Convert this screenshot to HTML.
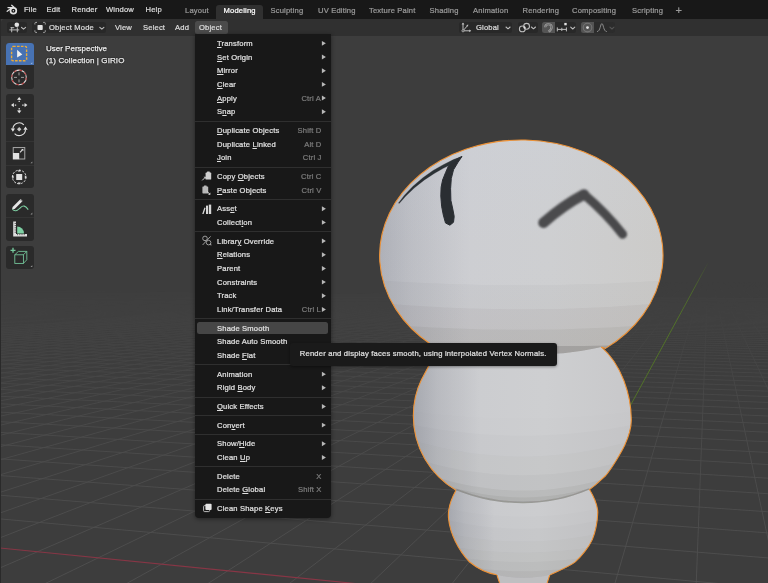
<!DOCTYPE html>
<html><head><meta charset="utf-8"><title>Blender</title>
<style>
*{box-sizing:border-box;margin:0;padding:0}
html,body{width:768px;height:583px;overflow:hidden;background:#3d3d3d}
body{position:relative;font-family:"Liberation Sans","DejaVu Sans",sans-serif;font-size:8px;color:#e4e4e4;-webkit-font-smoothing:antialiased}
#topbar,#header,#menu,#tip,#vptext{will-change:transform}
#topbar .t,#header .t,#menu .mi,#tip span{-webkit-text-stroke:0.22px currentColor}
#menu .mi,#topbar .t,#header .t,#tip span{font-size:7.6px !important;letter-spacing:0.17px}
#topbar .t.plus{font-size:11px !important}
#tip span{letter-spacing:0.205px !important}
#menu .lb u{text-decoration-thickness:0.7px}
.abs{position:absolute}
#topbar{position:absolute;left:0;top:0;width:768px;height:19px;background:#181818}
#topbar .t{position:absolute;top:5px;line-height:10px;font-size:8px;color:#dcdcdc;white-space:nowrap}
#topbar .tab{color:#9a9a9a;top:6.2px}
#tabact{position:absolute;left:216px;top:5px;width:47px;height:14px;background:#303030;border-radius:3px 3px 0 0}
#header{position:absolute;left:1px;top:19px;width:767px;height:17px;background:#303030;border-radius:4px 0 0 0}
#header .t{position:absolute;top:3.5px;line-height:10px;font-size:8px;color:#dcdcdc;white-space:nowrap}
.hb{position:absolute;top:2.5px;height:11.5px;background:#282828;border-radius:2.5px}
.hb.on{background:#545454}
#leftedge{position:absolute;left:0;top:19px;width:1.2px;height:564px;background:#2a2a2a}
.tool{position:absolute;left:6px;width:27.5px;background:#2a2a2a;border-radius:3px}
.tool i{position:absolute;left:0;width:27.5px;height:1px;background:#343434}
#vptext{position:absolute;left:46px;top:43.2px;font-size:8px;line-height:11.8px;color:#f2f2f2;white-space:nowrap;text-shadow:0 0 1.5px #000,0 0 1px #000;-webkit-text-stroke:0.25px #f2f2f2}
#menu{position:absolute;left:195px;top:34px;width:136px;height:484px;background:#181818;border-radius:0 0 4px 4px;box-shadow:0 1px 4px rgba(0,0,0,.45)}
#menu .mi{position:absolute;left:0;width:136px;height:14px;line-height:14px;font-size:8px;color:#e0e0e0;white-space:nowrap}
#menu .lb{position:absolute;left:22px;top:0.7px}
#menu .lb u{text-decoration:underline;text-underline-offset:1px}
#menu .sc{position:absolute;right:9.5px;top:0.7px;color:#7c7c7c}
#menu .sc.ar{right:10px}
#menu .arw{position:absolute;left:126.8px;top:4.3px;width:0;height:0;border-left:4.2px solid #c4c4c4;border-top:2.6px solid transparent;border-bottom:2.6px solid transparent}
#menu .sep{position:absolute;left:0;width:136px;height:1px;background:#2f2f2f}
#menu .hl{position:absolute;left:2px;width:131px;height:12.5px;background:#464646;border-radius:2.5px}
#tip{position:absolute;left:289.8px;top:342.6px;width:267px;height:23px;background:#1a1a1a;border-radius:3px;box-shadow:0 1px 3px rgba(0,0,0,.4)}
#tip span{position:absolute;left:9.8px;top:6px;line-height:10px;font-size:8px;color:#e0e0e0;white-space:nowrap}
svg{position:absolute;left:0;top:0}
</style></head><body>

<!-- viewport grid + object -->
<svg width="768" height="583" viewBox="0 0 768 583">
<defs>
<linearGradient id="fade" x1="0" y1="262" x2="0" y2="583" gradientUnits="userSpaceOnUse">
<stop offset="0" stop-color="#fff" stop-opacity="0"/><stop offset="0.06" stop-color="#fff" stop-opacity="0"/><stop offset="0.2" stop-color="#fff" stop-opacity="0.27"/><stop offset="0.5" stop-color="#fff" stop-opacity="0.72"/><stop offset="1" stop-color="#fff" stop-opacity="1"/>
</linearGradient>
<linearGradient id="fade2" x1="0" y1="262" x2="0" y2="583" gradientUnits="userSpaceOnUse">
<stop offset="0" stop-color="#fff" stop-opacity="0"/><stop offset="0.01" stop-color="#fff" stop-opacity="0.15"/><stop offset="0.08" stop-color="#fff" stop-opacity="0.75"/><stop offset="0.2" stop-color="#fff" stop-opacity="1"/><stop offset="1" stop-color="#fff" stop-opacity="1"/>
</linearGradient>
<mask id="gm2" maskUnits="userSpaceOnUse" x="0" y="0" width="768" height="583"><rect x="0" y="250" width="768" height="340" fill="url(#fade2)"/></mask>
<mask id="gm" maskUnits="userSpaceOnUse" x="0" y="0" width="768" height="583"><rect x="0" y="250" width="768" height="340" fill="url(#fade)"/></mask>
<linearGradient id="gHead" x1="379" y1="0" x2="663" y2="0" gradientUnits="userSpaceOnUse">
<stop offset="0" stop-color="#c6c7cc"/><stop offset="0.3" stop-color="#cdced2"/><stop offset="0.6" stop-color="#cecfd1"/><stop offset="1" stop-color="#cccbc9"/>
</linearGradient>
<linearGradient id="gHeadV" x1="0" y1="140" x2="0" y2="350" gradientUnits="userSpaceOnUse">
<stop offset="0" stop-color="#cdd2dc" stop-opacity="0.25"/><stop offset="0.5" stop-color="#cdd2dc" stop-opacity="0"/><stop offset="1" stop-color="#c8c0b4" stop-opacity="0.15"/>
</linearGradient>
<linearGradient id="gHeadL" x1="379" y1="0" x2="470" y2="0" gradientUnits="userSpaceOnUse">
<stop offset="0" stop-color="#5a6070" stop-opacity="0.22"/><stop offset="0.35" stop-color="#5a6070" stop-opacity="0.11"/><stop offset="1" stop-color="#5a6070" stop-opacity="0"/>
</linearGradient>
<linearGradient id="gMid" x1="414" y1="0" x2="632" y2="0" gradientUnits="userSpaceOnUse">
<stop offset="0" stop-color="#c2c3c7"/><stop offset="0.3" stop-color="#cccdd0"/><stop offset="0.6" stop-color="#cecfd1"/><stop offset="1" stop-color="#c8c8ca"/>
</linearGradient>
<linearGradient id="gMidL" x1="414" y1="0" x2="480" y2="0" gradientUnits="userSpaceOnUse">
<stop offset="0" stop-color="#5a6070" stop-opacity="0.26"/><stop offset="0.35" stop-color="#5a6070" stop-opacity="0.12"/><stop offset="1" stop-color="#5a6070" stop-opacity="0"/>
</linearGradient>
<linearGradient id="gBot" x1="448" y1="0" x2="598" y2="0" gradientUnits="userSpaceOnUse">
<stop offset="0" stop-color="#c0c1c5"/><stop offset="0.3" stop-color="#cacbce"/><stop offset="0.6" stop-color="#cccdcf"/><stop offset="1" stop-color="#c6c6c8"/>
</linearGradient>
<linearGradient id="gBotL" x1="448" y1="0" x2="495" y2="0" gradientUnits="userSpaceOnUse">
<stop offset="0" stop-color="#5a6070" stop-opacity="0.24"/><stop offset="0.35" stop-color="#5a6070" stop-opacity="0.11"/><stop offset="1" stop-color="#5a6070" stop-opacity="0"/>
</linearGradient>
<filter id="bl2" x="-20%" y="-20%" width="140%" height="140%"><feGaussianBlur stdDeviation="0.55"/></filter>
<filter id="bl" x="-20%" y="-20%" width="140%" height="140%"><feGaussianBlur stdDeviation="0.9"/></filter>
</defs>
<g mask="url(#gm)">
<g stroke="#505050" stroke-width="0.9" fill="none">
<line x1="-10" y1="693.2" x2="780" y2="812.7"/>
<line x1="-10" y1="630.2" x2="780" y2="732.3"/>
<line x1="-10" y1="583.3" x2="780" y2="672.4"/>
<line x1="-10" y1="518.0" x2="780" y2="589.0"/>
<line x1="-10" y1="494.4" x2="780" y2="558.9"/>
<line x1="-10" y1="474.8" x2="780" y2="533.8"/>
<line x1="-10" y1="458.2" x2="780" y2="512.6"/>
<line x1="-10" y1="444.1" x2="780" y2="494.5"/>
<line x1="-10" y1="431.8" x2="780" y2="478.9"/>
<line x1="-10" y1="421.1" x2="780" y2="465.2"/>
<line x1="-10" y1="411.6" x2="780" y2="453.1"/>
<line x1="-10" y1="403.3" x2="780" y2="442.4"/>
<line x1="-10" y1="395.8" x2="780" y2="432.8"/>
<line x1="-10" y1="389.0" x2="780" y2="424.2"/>
<line x1="-10" y1="382.9" x2="780" y2="416.5"/>
<line x1="-10" y1="377.4" x2="780" y2="409.4"/>
<line x1="-10" y1="372.3" x2="780" y2="402.9"/>
<line x1="-10" y1="367.7" x2="780" y2="397.0"/>
<line x1="-10" y1="363.5" x2="780" y2="391.6"/>
<line x1="-10" y1="359.5" x2="780" y2="386.6"/>
<line x1="-10" y1="355.9" x2="780" y2="381.9"/>
<line x1="-10" y1="352.5" x2="780" y2="377.6"/>
<line x1="-10" y1="349.4" x2="780" y2="373.6"/>
<line x1="-10" y1="346.5" x2="780" y2="369.9"/>
<line x1="-10" y1="343.7" x2="780" y2="366.4"/>
<line x1="-10" y1="341.2" x2="780" y2="363.1"/>
<line x1="-10" y1="338.8" x2="780" y2="360.0"/>
<line x1="-10" y1="336.5" x2="780" y2="357.1"/>
<line x1="-10" y1="334.3" x2="780" y2="354.4"/>
<line x1="-10" y1="332.3" x2="780" y2="351.8"/>
<line x1="-10" y1="330.4" x2="780" y2="349.4"/>
<line x1="-10" y1="328.6" x2="780" y2="347.1"/>
<line x1="-10" y1="326.9" x2="780" y2="344.9"/>
<line x1="-10" y1="325.3" x2="780" y2="342.8"/>
<line x1="-10" y1="323.7" x2="780" y2="340.8"/>
<line x1="-10" y1="322.2" x2="780" y2="338.9"/>
<line x1="-10" y1="320.8" x2="780" y2="337.2"/>
<line x1="-10" y1="319.5" x2="780" y2="335.4"/>
<line x1="-10" y1="318.2" x2="780" y2="333.8"/>
<line x1="-10" y1="317.0" x2="780" y2="332.2"/>
<line x1="-10" y1="315.8" x2="780" y2="330.7"/>
<line x1="-10" y1="314.7" x2="780" y2="329.3"/>
<line x1="-10" y1="313.6" x2="780" y2="327.9"/>
<line x1="-10" y1="312.6" x2="780" y2="326.6"/>
<line x1="-10" y1="311.6" x2="780" y2="325.3"/>
<line x1="-10" y1="310.6" x2="780" y2="324.1"/>
<line x1="-10" y1="309.7" x2="780" y2="322.9"/>
<line x1="-10" y1="308.8" x2="780" y2="321.8"/>
<line x1="-10" y1="308.0" x2="780" y2="320.7"/>
<line x1="-10" y1="307.1" x2="780" y2="319.7"/>
<line x1="-10" y1="306.3" x2="780" y2="318.6"/>
<line x1="-10" y1="305.6" x2="780" y2="317.7"/>
<line x1="-10" y1="304.8" x2="780" y2="316.7"/>
<line x1="-10" y1="304.1" x2="780" y2="315.8"/>
<line x1="-10" y1="303.4" x2="780" y2="314.9"/>
<line x1="-10" y1="302.8" x2="780" y2="314.1"/>
<line x1="-10" y1="302.1" x2="780" y2="313.2"/>
<line x1="-10" y1="301.5" x2="780" y2="312.4"/>
<line x1="-10" y1="300.9" x2="780" y2="311.7"/>
<line x1="-10" y1="300.3" x2="780" y2="310.9"/>
<line x1="-10" y1="299.7" x2="780" y2="310.2"/>
<line x1="-10" y1="299.2" x2="780" y2="309.5"/>
<line x1="-10" y1="298.6" x2="780" y2="308.8"/>
<line x1="-10" y1="298.1" x2="780" y2="308.1"/>
<line x1="-10" y1="297.6" x2="780" y2="307.4"/>
<line x1="-10" y1="297.1" x2="780" y2="306.8"/>
<line x1="-10" y1="296.6" x2="780" y2="306.2"/>
<line x1="-10" y1="296.1" x2="780" y2="305.6"/>
<line x1="-10" y1="295.7" x2="780" y2="305.0"/>
<line x1="-10" y1="295.2" x2="780" y2="304.5"/>
<line x1="-10" y1="294.8" x2="780" y2="303.9"/>
<line x1="-10" y1="294.4" x2="780" y2="303.4"/>
<line x1="-10" y1="294.0" x2="780" y2="302.8"/>
<line x1="-10" y1="293.6" x2="780" y2="302.3"/>
<line x1="-10" y1="293.2" x2="780" y2="301.8"/>
<line x1="-10" y1="292.8" x2="780" y2="301.3"/>
<line x1="-10" y1="292.4" x2="780" y2="300.9"/>
<line x1="-10" y1="292.1" x2="780" y2="300.4"/>
<line x1="-10" y1="291.7" x2="780" y2="300.0"/>
<line x1="-10" y1="291.4" x2="780" y2="299.5"/>
<line x1="-10" y1="291.0" x2="780" y2="299.1"/>
<line x1="-10" y1="290.7" x2="780" y2="298.7"/>
<line x1="708.5" y1="262.0" x2="3946.2" y2="600"/>
<line x1="708.5" y1="262.0" x2="3860.7" y2="600"/>
<line x1="708.5" y1="262.0" x2="3775.1" y2="600"/>
<line x1="708.5" y1="262.0" x2="3689.6" y2="600"/>
<line x1="708.5" y1="262.0" x2="3604.1" y2="600"/>
<line x1="708.5" y1="262.0" x2="3518.5" y2="600"/>
<line x1="708.5" y1="262.0" x2="3433.0" y2="600"/>
<line x1="708.5" y1="262.0" x2="3347.4" y2="600"/>
<line x1="708.5" y1="262.0" x2="3261.9" y2="600"/>
<line x1="708.5" y1="262.0" x2="3176.3" y2="600"/>
<line x1="708.5" y1="262.0" x2="3090.8" y2="600"/>
<line x1="708.5" y1="262.0" x2="3005.3" y2="600"/>
<line x1="708.5" y1="262.0" x2="2919.7" y2="600"/>
<line x1="708.5" y1="262.0" x2="2834.2" y2="600"/>
<line x1="708.5" y1="262.0" x2="2748.6" y2="600"/>
<line x1="708.5" y1="262.0" x2="2663.1" y2="600"/>
<line x1="708.5" y1="262.0" x2="2577.5" y2="600"/>
<line x1="708.5" y1="262.0" x2="2492.0" y2="600"/>
<line x1="708.5" y1="262.0" x2="2406.5" y2="600"/>
<line x1="708.5" y1="262.0" x2="2320.9" y2="600"/>
<line x1="708.5" y1="262.0" x2="2235.4" y2="600"/>
<line x1="708.5" y1="262.0" x2="2149.8" y2="600"/>
<line x1="708.5" y1="262.0" x2="2064.3" y2="600"/>
<line x1="708.5" y1="262.0" x2="1978.7" y2="600"/>
<line x1="708.5" y1="262.0" x2="1893.2" y2="600"/>
<line x1="708.5" y1="262.0" x2="1807.7" y2="600"/>
<line x1="708.5" y1="262.0" x2="1722.1" y2="600"/>
<line x1="708.5" y1="262.0" x2="1636.6" y2="600"/>
<line x1="708.5" y1="262.0" x2="1551.0" y2="600"/>
<line x1="708.5" y1="262.0" x2="1465.5" y2="600"/>
<line x1="708.5" y1="262.0" x2="1379.9" y2="600"/>
<line x1="708.5" y1="262.0" x2="1294.4" y2="600"/>
<line x1="708.5" y1="262.0" x2="1208.9" y2="600"/>
<line x1="708.5" y1="262.0" x2="1123.3" y2="600"/>
<line x1="708.5" y1="262.0" x2="1037.8" y2="600"/>
<line x1="708.5" y1="262.0" x2="952.2" y2="600"/>
<line x1="708.5" y1="262.0" x2="866.7" y2="600"/>
<line x1="708.5" y1="262.0" x2="781.1" y2="600"/>
<line x1="708.5" y1="262.0" x2="695.6" y2="600"/>
<line x1="708.5" y1="262.0" x2="610.1" y2="600"/>
<line x1="708.5" y1="262.0" x2="439.0" y2="600"/>
<line x1="708.5" y1="262.0" x2="353.4" y2="600"/>
<line x1="708.5" y1="262.0" x2="267.9" y2="600"/>
<line x1="708.5" y1="262.0" x2="182.3" y2="600"/>
<line x1="708.5" y1="262.0" x2="96.8" y2="600"/>
<line x1="708.5" y1="262.0" x2="11.3" y2="600"/>
<line x1="708.5" y1="262.0" x2="-74.3" y2="600"/>
<line x1="708.5" y1="262.0" x2="-159.8" y2="600"/>
<line x1="708.5" y1="262.0" x2="-245.4" y2="600"/>
<line x1="708.5" y1="262.0" x2="-330.9" y2="600"/>
<line x1="708.5" y1="262.0" x2="-416.5" y2="600"/>
<line x1="708.5" y1="262.0" x2="-502.0" y2="600"/>
<line x1="708.5" y1="262.0" x2="-587.5" y2="600"/>
<line x1="708.5" y1="262.0" x2="-673.1" y2="600"/>
<line x1="708.5" y1="262.0" x2="-758.6" y2="600"/>
<line x1="708.5" y1="262.0" x2="-844.2" y2="600"/>
<line x1="708.5" y1="262.0" x2="-929.7" y2="600"/>
<line x1="708.5" y1="262.0" x2="-1015.3" y2="600"/>
<line x1="708.5" y1="262.0" x2="-1100.8" y2="600"/>
<line x1="708.5" y1="262.0" x2="-1186.3" y2="600"/>
<line x1="708.5" y1="262.0" x2="-1271.9" y2="600"/>
<line x1="708.5" y1="262.0" x2="-1357.4" y2="600"/>
<line x1="708.5" y1="262.0" x2="-1443.0" y2="600"/>
<line x1="708.5" y1="262.0" x2="-1528.5" y2="600"/>
<line x1="708.5" y1="262.0" x2="-1614.1" y2="600"/>
<line x1="708.5" y1="262.0" x2="-1699.6" y2="600"/>
<line x1="708.5" y1="262.0" x2="-1785.1" y2="600"/>
<line x1="708.5" y1="262.0" x2="-1870.7" y2="600"/>
<line x1="708.5" y1="262.0" x2="-1956.2" y2="600"/>
<line x1="708.5" y1="262.0" x2="-2041.8" y2="600"/>
<line x1="708.5" y1="262.0" x2="-2127.3" y2="600"/>
<line x1="708.5" y1="262.0" x2="-2212.9" y2="600"/>
<line x1="708.5" y1="262.0" x2="-2298.4" y2="600"/>
<line x1="708.5" y1="262.0" x2="-2383.9" y2="600"/>
<line x1="708.5" y1="262.0" x2="-2469.5" y2="600"/>
<line x1="708.5" y1="262.0" x2="-2555.0" y2="600"/>
<line x1="708.5" y1="262.0" x2="-2640.6" y2="600"/>
<line x1="708.5" y1="262.0" x2="-2726.1" y2="600"/>
<line x1="708.5" y1="262.0" x2="-2811.7" y2="600"/>
<line x1="708.5" y1="262.0" x2="-2897.2" y2="600"/>
</g>
<line x1="-10" y1="547.0" x2="780" y2="626.0" stroke="#8a3646" stroke-width="1.1"/>
</g>
<g mask="url(#gm2)"><line x1="708.5" y1="262.0" x2="524.5" y2="600" stroke="#527229" stroke-width="1"/></g>

<!-- object -->
<g id="obj">
<path d="M496.5 573 C497.5 577 498.5 580 500 584 L546.9 584 C548 580 549.3 577 550.3 573 Z" fill="#bfbfc1"/><path d="M496.5 573 C497.5 577 498.5 580 500 584 M546.9 584 C548 580 549.3 577 550.3 573" fill="none" stroke="#ee9236" stroke-width="1.1"/>
<clipPath id="cBot"><path d="M456 490.2 C450 501 447.5 510 448.6 519 C450 533 458 550 469.6 562 C478 569 487 573 496.5 574.8 C512 579 536 579 550.3 574.8 C561.5 569.6 570 566 575.2 561.9 C581 557 589 547 592.3 539.6 C595 533 597.5 521 597.8 512.2 C597.5 505 594.9 498.4 589.2 489 Z"/></clipPath>
<path d="M456 490.2 C450 501 447.5 510 448.6 519 C450 533 458 550 469.6 562 C478 569 487 573 496.5 574.8 C512 579 536 579 550.3 574.8 C561.5 569.6 570 566 575.2 561.9 C581 557 589 547 592.3 539.6 C595 533 597.5 521 597.8 512.2 C597.5 505 594.9 498.4 589.2 489 Z" fill="url(#gBot)"/>
<g clip-path="url(#cBot)">
<rect x="440" y="480" width="170" height="110" fill="url(#gBotL)"/>
<path d="M440.0 506.3 L446.9 507.9 L453.8 509.4 L460.8 510.7 L467.7 511.9 L474.6 512.9 L481.5 513.8 L488.4 514.6 L495.3 515.3 L502.2 515.8 L509.2 516.1 L516.1 516.3 L523.0 516.4 L529.9 516.3 L536.8 516.1 L543.8 515.8 L550.7 515.3 L557.6 514.7 L564.5 513.9 L571.4 513.0 L578.3 512.0 L585.2 510.8 L592.2 509.5 L599.1 508.0 L606.0 506.4 L606 590 L440 590 Z" fill="#2a2418" fill-opacity="0.006"/>
<path d="M440.0 518.1 L446.9 519.7 L453.8 521.3 L460.8 522.6 L467.7 523.9 L474.6 524.9 L481.5 525.9 L488.4 526.7 L495.3 527.3 L502.2 527.8 L509.2 528.2 L516.1 528.4 L523.0 528.5 L529.9 528.4 L536.8 528.2 L543.8 527.9 L550.7 527.4 L557.6 526.7 L564.5 526.0 L571.4 525.0 L578.3 524.0 L585.2 522.7 L592.2 521.4 L599.1 519.9 L606.0 518.2 L606 590 L440 590 Z" fill="#2a2418" fill-opacity="0.01"/>
<path d="M440.0 531.7 L446.9 533.2 L453.8 534.6 L460.8 535.9 L467.7 537.0 L474.6 538.0 L481.5 538.9 L488.4 539.6 L495.3 540.2 L502.2 540.7 L509.2 541.0 L516.1 541.2 L523.0 541.3 L529.9 541.2 L536.8 541.0 L543.8 540.7 L550.7 540.3 L557.6 539.7 L564.5 538.9 L571.4 538.1 L578.3 537.1 L585.2 536.0 L592.2 534.7 L599.1 533.3 L606.0 531.8 L606 590 L440 590 Z" fill="#2a2418" fill-opacity="0.015"/>
<path d="M440.0 544.3 L446.9 545.6 L453.8 546.8 L460.8 547.9 L467.7 548.8 L474.6 549.7 L481.5 550.4 L488.4 551.1 L495.3 551.6 L502.2 552.0 L509.2 552.3 L516.1 552.4 L523.0 552.5 L529.9 552.4 L536.8 552.3 L543.8 552.0 L550.7 551.6 L557.6 551.1 L564.5 550.5 L571.4 549.8 L578.3 548.9 L585.2 548.0 L592.2 546.9 L599.1 545.7 L606.0 544.4 L606 590 L440 590 Z" fill="#2a2418" fill-opacity="0.02"/>
<path d="M440.0 554.1 L446.9 555.3 L453.8 556.5 L460.8 557.5 L467.7 558.4 L474.6 559.2 L481.5 559.9 L488.4 560.5 L495.3 561.0 L502.2 561.4 L509.2 561.7 L516.1 561.8 L523.0 561.9 L529.9 561.9 L536.8 561.7 L543.8 561.4 L550.7 561.1 L557.6 560.6 L564.5 560.0 L571.4 559.3 L578.3 558.5 L585.2 557.6 L592.2 556.6 L599.1 555.4 L606.0 554.2 L606 590 L440 590 Z" fill="#2a2418" fill-opacity="0.028"/>
<path d="M440.0 560.5 L446.9 562.2 L453.8 563.8 L460.8 565.2 L467.7 566.5 L474.6 567.6 L481.5 568.6 L488.4 569.4 L495.3 570.1 L502.2 570.6 L509.2 571.0 L516.1 571.2 L523.0 571.3 L529.9 571.2 L536.8 571.0 L543.8 570.6 L550.7 570.1 L557.6 569.5 L564.5 568.6 L571.4 567.7 L578.3 566.6 L585.2 565.3 L592.2 563.9 L599.1 562.3 L606.0 560.6 L606 590 L440 590 Z" fill="#2a2418" fill-opacity="0.04"/>
</g>
<path d="M456 490.2 C450 501 447.5 510 448.6 519 C450 533 458 550 469.6 562 C478 569 487 573 496.5 574.8 M550.3 574.8 C561.5 569.6 570 566 575.2 561.9 C581 557 589 547 592.3 539.6 C595 533 597.5 521 597.8 512.2 C597.5 505 594.9 498.4 589.2 489" fill="none" stroke="#ee9236" stroke-width="1.1" stroke-linejoin="round"/>
<clipPath id="cMid"><path d="M438 345.5 C435 353 428.5 367 421.3 380 C416 391 413.3 404 413.3 416 C413.3 447 430 475 456 490.2 C478 499 500 503.2 523 503.2 C546 503.2 568 499 589.4 489.6 L595.5 484.9 L605.8 475.5 C612 468 621 453 624.7 445.3 C629 436 631.5 425 631.3 418.9 C631 395 622 365 601.3 346.9 Z"/></clipPath>
<path d="M438 345.5 C435 353 428.5 367 421.3 380 C416 391 413.3 404 413.3 416 C413.3 447 430 475 456 490.2 C478 499 500 503.2 523 503.2 C546 503.2 568 499 589.4 489.6 L595.5 484.9 L605.8 475.5 C612 468 621 453 624.7 445.3 C629 436 631.5 425 631.3 418.9 C631 395 622 365 601.3 346.9 Z" fill="url(#gMid)"/>
<g clip-path="url(#cMid)">
<rect x="400" y="330" width="250" height="180" fill="url(#gMidL)"/>
<path d="M400.0 409.2 L410.2 410.6 L420.5 411.8 L430.8 413.0 L441.0 414.0 L451.2 414.9 L461.5 415.7 L471.8 416.4 L482.0 416.9 L492.2 417.4 L502.5 417.7 L512.8 417.8 L523.0 417.9 L533.2 417.8 L543.5 417.7 L553.8 417.4 L564.0 416.9 L574.2 416.4 L584.5 415.7 L594.8 414.9 L605.0 414.0 L615.2 413.0 L625.5 411.8 L635.8 410.6 L646.0 409.2 L646 520 L400 520 Z" fill="#2a2418" fill-opacity="0.005"/>
<path d="M400.0 421.8 L410.2 424.0 L420.5 426.0 L430.8 427.8 L441.0 429.4 L451.2 430.8 L461.5 432.1 L471.8 433.1 L482.0 434.0 L492.2 434.6 L502.5 435.1 L512.8 435.4 L523.0 435.5 L533.2 435.4 L543.5 435.1 L553.8 434.6 L564.0 434.0 L574.2 433.1 L584.5 432.1 L594.8 430.8 L605.0 429.4 L615.2 427.8 L625.5 426.0 L635.8 424.0 L646.0 421.8 L646 520 L400 520 Z" fill="#2a2418" fill-opacity="0.011"/>
<path d="M400.0 436.0 L410.2 439.3 L420.5 442.3 L430.8 444.9 L441.0 447.4 L451.2 449.5 L461.5 451.3 L471.8 452.9 L482.0 454.1 L492.2 455.1 L502.5 455.8 L512.8 456.3 L523.0 456.4 L533.2 456.3 L543.5 455.8 L553.8 455.1 L564.0 454.1 L574.2 452.9 L584.5 451.3 L594.8 449.5 L605.0 447.4 L615.2 444.9 L625.5 442.3 L635.8 439.3 L646.0 436.0 L646 520 L400 520 Z" fill="#2a2418" fill-opacity="0.016"/>
<path d="M400.0 453.9 L410.2 457.3 L420.5 460.4 L430.8 463.2 L441.0 465.7 L451.2 468.0 L461.5 469.9 L471.8 471.5 L482.0 472.8 L492.2 473.9 L502.5 474.6 L512.8 475.1 L523.0 475.2 L533.2 475.1 L543.5 474.6 L553.8 473.9 L564.0 472.8 L574.2 471.5 L584.5 469.9 L594.8 468.0 L605.0 465.7 L615.2 463.2 L625.5 460.4 L635.8 457.3 L646.0 453.9 L646 520 L400 520 Z" fill="#2a2418" fill-opacity="0.027"/>
<path d="M400.0 463.6 L410.2 467.9 L420.5 471.9 L430.8 475.4 L441.0 478.6 L451.2 481.4 L461.5 483.9 L471.8 485.9 L482.0 487.6 L492.2 488.9 L502.5 489.9 L512.8 490.4 L523.0 490.6 L533.2 490.4 L543.5 489.9 L553.8 488.9 L564.0 487.6 L574.2 485.9 L584.5 483.9 L594.8 481.4 L605.0 478.6 L615.2 475.4 L625.5 471.9 L635.8 467.9 L646.0 463.6 L646 520 L400 520 Z" fill="#2a2418" fill-opacity="0.05"/>
<path d="M400.0 466.3 L410.2 471.3 L420.5 475.8 L430.8 479.9 L441.0 483.6 L451.2 486.9 L461.5 489.7 L471.8 492.1 L482.0 494.0 L492.2 495.5 L502.5 496.6 L512.8 497.3 L523.0 497.5 L533.2 497.3 L543.5 496.6 L553.8 495.5 L564.0 494.0 L574.2 492.1 L584.5 489.7 L594.8 486.9 L605.0 483.6 L615.2 479.9 L625.5 475.8 L635.8 471.3 L646.0 466.3 L646 520 L400 520 Z" fill="#2a2418" fill-opacity="0.06"/>
<path d="M456 490.2 C478 499 500 503.2 523 503.2 C546 503.2 568 499 589.4 489.6" fill="none" stroke="#3a342c" stroke-opacity="0.2" stroke-width="3.2" filter="url(#bl2)"/>
</g>
<path d="M438 345.5 C435 353 428.5 367 421.3 380 C416 391 413.3 404 413.3 416 C413.3 447 430 475 456 490.2 M589.4 489.6 L595.5 484.9 L605.8 475.5 C612 468 621 453 624.7 445.3 C629 436 631.5 425 631.3 418.9 C631 395 622 365 601.3 346.9" fill="none" stroke="#ee9236" stroke-width="1.1" stroke-linejoin="round"/>
<clipPath id="cHead"><path d="M431 344.5 A141.7 115.5 0 1 1 605.5 348.4 L601.3 346.9 C590 349.5 572 352.5 558 353.6 C540 355.5 500 355.5 484 353.6 C465 351.5 448 348 431 344.5 Z"/></clipPath>
<path d="M431 344.5 A141.7 115.5 0 1 1 605.5 348.4 L601.3 346.9 C590 349.5 572 352.5 558 353.6 C540 355.5 500 355.5 484 353.6 C465 351.5 448 348 431 344.5 Z" fill="url(#gHead)"/>
<g clip-path="url(#cHead)">
<rect x="370" y="130" width="300" height="230" fill="url(#gHeadV)"/>
<rect x="370" y="130" width="300" height="230" fill="url(#gHeadL)"/>
<path d="M370.0 279.7 L382.6 280.6 L395.2 281.4 L407.8 282.1 L420.3 282.8 L432.9 283.3 L445.5 283.8 L458.1 284.2 L470.7 284.6 L483.2 284.9 L495.8 285.0 L508.4 285.2 L521.0 285.2 L533.6 285.2 L546.2 285.1 L558.8 284.9 L571.3 284.6 L583.9 284.3 L596.5 283.9 L609.1 283.4 L621.7 282.8 L634.2 282.2 L646.8 281.4 L659.4 280.7 L672.0 279.8 L672 370 L370 370 Z" fill="#2a2418" fill-opacity="0.026"/>
<path d="M370.0 302.0 L382.6 303.2 L395.2 304.3 L407.8 305.2 L420.3 306.1 L432.9 306.8 L445.5 307.5 L458.1 308.0 L470.7 308.5 L483.2 308.8 L495.8 309.1 L508.4 309.2 L521.0 309.3 L533.6 309.3 L546.2 309.1 L558.8 308.9 L571.3 308.5 L583.9 308.1 L596.5 307.5 L609.1 306.9 L621.7 306.1 L634.2 305.3 L646.8 304.3 L659.4 303.2 L672.0 302.1 L672 370 L370 370 Z" fill="#2a2418" fill-opacity="0.04"/>
<path d="M370.0 323.1 L382.6 324.1 L395.2 325.1 L407.8 326.0 L420.3 326.8 L432.9 327.5 L445.5 328.1 L458.1 328.6 L470.7 329.0 L483.2 329.4 L495.8 329.6 L508.4 329.8 L521.0 329.8 L533.6 329.8 L546.2 329.6 L558.8 329.4 L571.3 329.1 L583.9 328.6 L596.5 328.1 L609.1 327.5 L621.7 326.8 L634.2 326.0 L646.8 325.2 L659.4 324.2 L672.0 323.1 L672 370 L370 370 Z" fill="#2a2418" fill-opacity="0.052"/>
<path d="M370.0 344.4 L382.6 344.7 L395.2 345.0 L407.8 345.2 L420.3 345.4 L432.9 345.6 L445.5 345.8 L458.1 345.9 L470.7 346.0 L483.2 346.1 L495.8 346.1 L508.4 346.2 L521.0 346.2 L533.6 346.2 L546.2 346.2 L558.8 346.1 L571.3 346.0 L583.9 345.9 L596.5 345.8 L609.1 345.6 L621.7 345.4 L634.2 345.2 L646.8 345.0 L659.4 344.7 L672.0 344.4 L672 370 L370 370 Z" fill="#1a1612" fill-opacity="0.14"/>
</g>
<path d="M431 344.5 A141.7 115.5 0 1 1 605.5 348.4 L601.3 346.9" fill="none" stroke="#ee9236" stroke-width="1.1" stroke-linejoin="round"/>
<g clip-path="url(#cHead)">
<g filter="url(#bl2)"><path d="M462 156.4 L457.9 162.5 L453.5 169.8 L451.3 178.5 L450.6 188.7 L450.9 200.4 L452.8 209.1 L454.2 216.4 L453.5 222.3 L449.9 225.2 L445.5 223 L443.3 215 L441.6 206.2 L440.8 196 L441.1 187.3 L442.6 180 L445.5 172.7 L448.4 166.1 L452 161.5 Z" fill="#2a2e33" stroke="#2a2e33" stroke-width="1" stroke-linejoin="round"/>
<path d="M462 156.4 L453.5 159.6 L443.3 164.7 L433.1 170.5 L422.9 177.8 L412.7 186.5 L404.5 195.2 L398.5 203 L399.2 203.4 L405.6 196.3 L414.2 188.0 L424.4 179.9 L434.6 173.2 L443.3 168.3 L449.5 165.2 Z" fill="#2c3035" stroke="#2c3035" stroke-width="0.3" stroke-linejoin="round"/></g>
<g filter="url(#bl)" stroke-linecap="round" stroke-linejoin="round">
<path d="M543.5 222.8 Q563 205.5 584 194.4" fill="none" stroke="#4b4b4e" stroke-width="10.5"/>
<path d="M584 194.4 Q606 213 622.6 234.2" fill="none" stroke="#48484b" stroke-width="9"/>
</g></g>
</g>
</svg>

<div id="leftedge"></div>

<!-- top bar -->
<div id="topbar">

<span class="t" style="left:24px">File</span>
<span class="t" style="left:46.5px">Edit</span>
<span class="t" style="left:71.5px">Render</span>
<span class="t" style="left:106px">Window</span>
<span class="t" style="left:145.5px">Help</span>
<div id="tabact"></div>
<span class="t tab" style="left:185px">Layout</span>
<span class="t" style="left:223.5px;color:#fff;top:6.2px">Modeling</span>
<span class="t tab" style="left:270.5px">Sculpting</span>
<span class="t tab" style="left:318px">UV Editing</span>
<span class="t tab" style="left:369px">Texture Paint</span>
<span class="t tab" style="left:429.5px">Shading</span>
<span class="t tab" style="left:473px">Animation</span>
<span class="t tab" style="left:522.5px">Rendering</span>
<span class="t tab" style="left:572px">Compositing</span>
<span class="t tab" style="left:632px">Scripting</span>
<span class="t tab plus" style="left:675.5px;top:4.5px">+</span>
</div>

<!-- header -->
<div id="header">
<div class="hb" style="left:6px;width:20px"></div>
<div class="hb" style="left:31px;width:74px"></div>
<span class="t" style="left:48px">Object Mode</span>
<span class="t" style="left:114px">View</span>
<span class="t" style="left:142px">Select</span>
<span class="t" style="left:174px">Add</span>
<div class="hb" style="left:194px;width:33px;background:#4b4b4b;top:2px;height:13px"></div>
<span class="t" style="left:198px">Object</span>
<div class="hb" style="left:458px;width:53px"></div>
<span class="t" style="left:475px">Global</span>
<div class="hb" style="left:516.5px;width:20px"></div>
<div class="hb on" style="left:541px;width:13px;border-radius:2.5px 0 0 2.5px"></div>
<div class="hb" style="left:554px;width:21px;border-radius:0 2.5px 2.5px 0"></div>
<div class="hb on" style="left:580px;width:12.5px;border-radius:2.5px 0 0 2.5px"></div>
<div class="hb" style="left:592.5px;width:21.5px;border-radius:0 2.5px 2.5px 0;background:#2c2c2c"></div>
</div>

<!-- tools -->
<div class="tool" style="top:42.5px;height:46.5px"><div style="position:absolute;left:0;top:0;width:27.5px;height:22.5px;background:#4772b3;border-radius:3px 3px 0 0"></div></div>
<div class="tool" style="top:94.3px;height:94.2px"><i style="top:23.3px"></i><i style="top:46.8px"></i><i style="top:70.4px"></i></div>
<div class="tool" style="top:194px;height:46.5px"><i style="top:23px"></i></div>
<div class="tool" style="top:245.7px;height:23.3px"></div>

<div id="vptext">User Perspective<br><span style="letter-spacing:0.1px">(1) Collection | GIRIO</span></div>

<!-- menu -->
<div id="menu">
<div style="position:absolute;left:0;top:2px;width:136px;height:482px">
<div class="mi" style="top:0.30px"><span class="lb"><u>T</u>ransform</span></div>
<div class="mi" style="top:13.98px"><span class="lb"><u>S</u>et Origin</span></div>
<div class="mi" style="top:27.66px"><span class="lb"><u>M</u>irror</span></div>
<div class="mi" style="top:41.34px"><span class="lb"><u>C</u>lear</span></div>
<div class="mi" style="top:55.02px"><span class="lb"><u>A</u>pply</span><span class="sc ar">Ctrl A</span></div>
<div class="mi" style="top:68.70px"><span class="lb">S<u>n</u>ap</span></div>
<div class="mi" style="top:87.35px"><span class="lb"><u>D</u>uplicate Objects</span><span class="sc">Shift D</span></div>
<div class="mi" style="top:101.03px"><span class="lb">Duplicate <u>L</u>inked</span><span class="sc">Alt D</span></div>
<div class="mi" style="top:114.71px"><span class="lb"><u>J</u>oin</span><span class="sc">Ctrl J</span></div>
<div class="mi" style="top:133.36px"><span class="lb">Copy <u>O</u>bjects</span><span class="sc">Ctrl C</span></div>
<div class="mi" style="top:147.04px"><span class="lb"><u>P</u>aste Objects</span><span class="sc">Ctrl V</span></div>
<div class="mi" style="top:165.69px"><span class="lb">Ass<u>e</u>t</span></div>
<div class="mi" style="top:179.37px"><span class="lb">Collect<u>i</u>on</span></div>
<div class="mi" style="top:198.02px"><span class="lb">Librar<u>y</u> Override</span></div>
<div class="mi" style="top:211.70px"><span class="lb"><u>R</u>elations</span></div>
<div class="mi" style="top:225.38px"><span class="lb">Parent</span></div>
<div class="mi" style="top:239.06px"><span class="lb">Constraints</span></div>
<div class="mi" style="top:252.74px"><span class="lb">Track</span></div>
<div class="mi" style="top:266.42px"><span class="lb">Link/Transfer Data</span><span class="sc ar">Ctrl L</span></div>
<div class="hl" style="top:285.82px"></div>
<div class="mi" style="top:285.07px"><span class="lb">Shade Smooth</span></div>
<div class="mi" style="top:298.75px"><span class="lb">Shade Auto Smooth</span></div>
<div class="mi" style="top:312.43px"><span class="lb">Shade <u>F</u>lat</span></div>
<div class="mi" style="top:331.08px"><span class="lb">Animation</span></div>
<div class="mi" style="top:344.76px"><span class="lb">Rigid <u>B</u>ody</span></div>
<div class="mi" style="top:363.41px"><span class="lb"><u>Q</u>uick Effects</span></div>
<div class="mi" style="top:382.06px"><span class="lb">Con<u>v</u>ert</span></div>
<div class="mi" style="top:400.71px"><span class="lb">Show/<u>H</u>ide</span></div>
<div class="mi" style="top:414.39px"><span class="lb">Clean <u>U</u>p</span></div>
<div class="mi" style="top:433.04px"><span class="lb">Delete</span><span class="sc">X</span></div>
<div class="mi" style="top:446.72px"><span class="lb">Delete <u>G</u>lobal</span><span class="sc">Shift X</span></div>
<div class="mi" style="top:465.37px"><span class="lb">Clean Shape <u>K</u>eys</span></div>
<div class="sep" style="top:84.53px"></div>
<div class="sep" style="top:130.54px"></div>
<div class="sep" style="top:162.87px"></div>
<div class="sep" style="top:195.20px"></div>
<div class="sep" style="top:282.25px"></div>
<div class="sep" style="top:328.26px"></div>
<div class="sep" style="top:360.59px"></div>
<div class="sep" style="top:379.24px"></div>
<div class="sep" style="top:397.89px"></div>
<div class="sep" style="top:430.22px"></div>
<div class="sep" style="top:462.55px"></div>
</div>
</div>

<div id="tip"><span>Render and display faces smooth, using interpolated Vertex Normals.</span></div>

<svg width="768" height="583" viewBox="0 0 768 583" style="pointer-events:none">
<path d="M321.9 40.90 L325.9 43.35 L321.9 45.80 Z" fill="#b8b8b8"/>
<path d="M321.9 54.58 L325.9 57.03 L321.9 59.48 Z" fill="#b8b8b8"/>
<path d="M321.9 68.26 L325.9 70.71 L321.9 73.16 Z" fill="#b8b8b8"/>
<path d="M321.9 81.94 L325.9 84.39 L321.9 86.84 Z" fill="#b8b8b8"/>
<path d="M321.9 95.62 L325.9 98.07 L321.9 100.52 Z" fill="#b8b8b8"/>
<path d="M321.9 109.30 L325.9 111.75 L321.9 114.20 Z" fill="#b8b8b8"/>
<path d="M321.9 206.29 L325.9 208.74 L321.9 211.19 Z" fill="#b8b8b8"/>
<path d="M321.9 219.97 L325.9 222.42 L321.9 224.87 Z" fill="#b8b8b8"/>
<path d="M321.9 238.62 L325.9 241.07 L321.9 243.52 Z" fill="#b8b8b8"/>
<path d="M321.9 252.30 L325.9 254.75 L321.9 257.20 Z" fill="#b8b8b8"/>
<path d="M321.9 265.98 L325.9 268.43 L321.9 270.88 Z" fill="#b8b8b8"/>
<path d="M321.9 279.66 L325.9 282.11 L321.9 284.56 Z" fill="#b8b8b8"/>
<path d="M321.9 293.34 L325.9 295.79 L321.9 298.24 Z" fill="#b8b8b8"/>
<path d="M321.9 307.02 L325.9 309.47 L321.9 311.92 Z" fill="#b8b8b8"/>
<path d="M321.9 371.68 L325.9 374.13 L321.9 376.58 Z" fill="#b8b8b8"/>
<path d="M321.9 385.36 L325.9 387.81 L321.9 390.26 Z" fill="#b8b8b8"/>
<path d="M321.9 404.01 L325.9 406.46 L321.9 408.91 Z" fill="#b8b8b8"/>
<path d="M321.9 422.66 L325.9 425.11 L321.9 427.56 Z" fill="#b8b8b8"/>
<path d="M321.9 441.31 L325.9 443.76 L321.9 446.21 Z" fill="#b8b8b8"/>
<path d="M321.9 454.99 L325.9 457.44 L321.9 459.89 Z" fill="#b8b8b8"/>
<g fill="none" stroke="#e2e2e2" stroke-linecap="round"><circle cx="13.4" cy="10.7" r="2.9" stroke-width="1.7"/><path d="M7.2 11.3 L12 7.8 M8 7.6 L13 7.5 M11.7 5.3 L14 7.2" stroke-width="1.3"/></g><circle cx="13.4" cy="10.7" r="0.7" fill="#e2e2e2"/>
<circle cx="16.8" cy="24.8" r="2.3" fill="#e2e2e2"/><g stroke="#bdbdbd" stroke-width="1" fill="none"><path d="M9.4 29.9 H19.2 M10.5 27.7 H14.2 M11.7 27 V32.3 M17.3 27.3 V32.3"/></g>
<path d="M21.5 27.3 l2.05 1.8 l2.05 -1.8" fill="none" stroke="#bdbdbd" stroke-width="1.1" stroke-linecap="round" stroke-linejoin="round"/>
<rect x="37.5" y="25" width="5.2" height="5" rx="0.8" fill="#e2e2e2"/><path d="M34.9 24.5 V23.3 Q34.9 22.4 35.8 22.4 H37 M43.2 22.4 H44.4 Q45.3 22.4 45.3 23.3 V24.5 M45.3 30.3 V31.5 Q45.3 32.4 44.4 32.4 H43.2 M37 32.4 H35.8 Q34.9 32.4 34.9 31.5 V30.3" fill="none" stroke="#a8a8a8" stroke-width="1"/>
<path d="M99.8 27.3 l2.05 1.8 l2.05 -1.8" fill="none" stroke="#bdbdbd" stroke-width="1.1" stroke-linecap="round" stroke-linejoin="round"/>
<g fill="none" stroke="#bdbdbd" stroke-width="1" stroke-linecap="round"><path d="M463 23.6 V30.8 H470 M463 30.8 L467.2 26"/></g><path d="M461.6 24.6 L463 22.6 L464.4 24.6 Z M469.2 29.4 L471.2 30.8 L469.2 32.2 Z M466.2 25.2 L468.3 24.6 L467.9 26.8 Z" fill="#bdbdbd"/><circle cx="463" cy="30.8" r="1.1" fill="#282828" stroke="#bdbdbd" stroke-width="0.8"/>
<path d="M506 27 l2.05 1.8 l2.05 -1.8" fill="none" stroke="#bdbdbd" stroke-width="1.1" stroke-linecap="round" stroke-linejoin="round"/>
<g fill="none" stroke="#bdbdbd" stroke-width="1.1"><circle cx="522.3" cy="28.9" r="2.9"/><circle cx="526.6" cy="26.3" r="2.9"/></g><circle cx="524.6" cy="27.5" r="0.9" fill="#e2e2e2"/>
<path d="M531.4 27 l2.05 1.8 l2.05 -1.8" fill="none" stroke="#bdbdbd" stroke-width="1.1" stroke-linecap="round" stroke-linejoin="round"/>
<path d="M545.2 27.2 C545.2 23.6 551.6 23 551.6 27 C551.6 29.2 550.3 30.6 548.6 31.6" fill="none" stroke="#a4a4a4" stroke-width="2.2" stroke-linecap="butt"/><path d="M545.2 27.2 C545.2 23.6 551.6 23 551.6 27 C551.6 29.2 550.3 30.6 548.6 31.6" fill="none" stroke="#545454" stroke-width="0.7"/>
<path d="M557.3 29.4 H566.4 M557.3 27.4 V31.4 M561.8 27.8 V31 M566.4 27.4 V31.4" fill="none" stroke="#bdbdbd" stroke-width="1"/><rect x="564.3" y="22.9" width="2.4" height="2.4" fill="#e2e2e2"/>
<path d="M570.7 27.2 l2.05 1.8 l2.05 -1.8" fill="none" stroke="#bdbdbd" stroke-width="1.1" stroke-linecap="round" stroke-linejoin="round"/>
<circle cx="587.5" cy="27.6" r="4.3" fill="none" stroke="#757575" stroke-width="1.1"/><circle cx="587.5" cy="27.6" r="1.4" fill="#e2e2e2"/>
<path d="M597 31.6 C600.5 31.4 600.3 23.6 601.9 23.6 C603.5 23.6 603.3 31.4 606.8 31.6" fill="none" stroke="#8c8c8c" stroke-width="1"/>
<path d="M609.9 27.2 l2.05 1.8 l2.05 -1.8" fill="none" stroke="#555" stroke-width="1.1" stroke-linecap="round" stroke-linejoin="round"/>
<rect x="11.6" y="46.4" width="15" height="14.4" rx="1.5" fill="none" stroke="#ecab37" stroke-width="1.4" stroke-dasharray="2.6 1.3"/><path d="M17.1 49.8 V57.6 L22.3 54.6 Z" fill="#f0f0f0"/><path d="M32.3 62.2 V64 H30.5 Z" fill="#9ab4dd"/>
<circle cx="19" cy="77.4" r="7.3" fill="none" stroke="#dcdcdc" stroke-width="1.05"/><circle cx="19" cy="77.4" r="7.3" fill="none" stroke="#b33a3a" stroke-width="1.05" stroke-dasharray="2.87 2.87"/><path d="M19 72.4 V75.4 M19 79.4 V82.4 M14 77.4 H17 M21 77.4 H24" stroke="#9c9c9c" stroke-width="1" fill="none"/>
<path d="M19.2 102.1 V99.1 M19.2 108.1 V111.1 M16.2 105.1 H13.2 M22.2 105.1 H25.2" stroke="#e2e2e2" stroke-width="1.2" fill="none" stroke-dasharray="1.4 0.8"/><path d="M17.0 99.69999999999999 L19.2 96.89999999999999 L21.4 99.69999999999999 Z M17.0 110.5 L19.2 113.3 L21.4 110.5 Z M13.799999999999999 102.89999999999999 L11.0 105.1 L13.799999999999999 107.3 Z M24.6 102.89999999999999 L27.4 105.1 L24.6 107.3 Z" fill="#e2e2e2"/>
<path d="M12.899999999999999 128.7 A6.3 6.3 0 0 1 23.799999999999997 124.79999999999998 M25.5 129.7 A6.3 6.3 0 0 1 14.6 133.6" fill="none" stroke="#e2e2e2" stroke-width="1.1"/><path d="M10.799999999999999 128.6 H15.0 L12.899999999999999 131.79999999999998 Z M27.6 129.79999999999998 H23.4 L25.5 126.6 Z" fill="#e2e2e2"/><path d="M19.2 126.99999999999999 L21.4 129.2 L19.2 131.39999999999998 L17.0 129.2 Z" fill="#c8c8c8"/>
<rect x="13.2" y="147.6" width="11.6" height="11.4" fill="none" stroke="#b5b5b5" stroke-width="0.9"/><rect x="13" y="153" width="6.2" height="6.2" fill="#e2e2e2"/><path d="M20 152.4 L22.6 149.6" stroke="#e2e2e2" stroke-width="1.1"/><path d="M21.2 149 H23.4 V151.2 Z" fill="#e2e2e2"/><path d="M32.3 161.4 V163.2 H30.5 Z" fill="#9a9a9a"/>
<circle cx="19.2" cy="177" r="6.8" fill="none" stroke="#e2e2e2" stroke-width="1" stroke-dasharray="2.2 1.3"/><rect x="16.2" y="174" width="6" height="6" fill="#e2e2e2"/><path d="M17.7 171.4 L19.2 169.4 L20.7 171.4 Z M17.7 182.6 L19.2 184.6 L20.7 182.6 Z M13.6 175.5 L11.6 177 L13.6 178.5 Z M24.799999999999997 175.5 L26.799999999999997 177 L24.799999999999997 178.5 Z" fill="#e2e2e2"/>
<path d="M12.6 207 L20.6 199 L22.6 201 L14.6 209 L12 209.6 Z" fill="#e6e6e6"/><path d="M20.1 199.5 L22.1 201.5" stroke="#2a2a2a" stroke-width="0.6"/><path d="M12.4 209.4 C16 212.5 18.5 209.5 20.5 207.6 C23 205.2 25.5 205.4 28.2 209.6" fill="none" stroke="#7fd1a4" stroke-width="1.1"/><path d="M32.3 212.6 V214.4 H30.5 Z" fill="#9a9a9a"/>
<path d="M17.2 233.4 V226.6 A6.8 6.8 0 0 1 24 233.4 Z" fill="#7fd1a4"/><path d="M13.2 221.6 H16 V234 H27 V236.6 H13.2 Z" fill="#dedede"/><path d="M14.6 223.4 H16 M14.6 225.6 H16 M14.6 227.8 H16 M14.6 230 H16 M14.6 232.2 H16 M17.6 234 V235.2 M19.8 234 V235.2 M22 234 V235.2 M24.2 234 V235.2" stroke="#2a2a2a" stroke-width="0.7" fill="none"/>
<g fill="none" stroke="#76c99d" stroke-width="0.85"><rect x="14.8" y="254.8" width="8.6" height="8.6"/><path d="M14.8 254.8 L18.4 251.4 H26.8 L23.4 254.8 M26.8 251.4 V259.8 L23.4 263.4"/><path d="M13 247.8 V252.8 M10.5 250.3 H15.5" stroke-width="1.3"/></g><path d="M32.3 265.2 V267 H30.5 Z" fill="#9a9a9a"/>
<g fill="#cfcfcf"><rect x="205.6" y="172.6" width="5.6" height="7" rx="0.6"/><rect x="207" y="171.6" width="2.8" height="1.6" rx="0.5"/></g><path d="M202.2 180.4 L205.4 177.2" stroke="#cfcfcf" stroke-width="1" fill="none"/><path d="M203.6 176.8 H205.8 V179 Z" fill="#cfcfcf"/>
<g fill="#b8b8b8"><rect x="202.4" y="186.4" width="5.8" height="7" rx="0.6"/><rect x="203.9" y="185.4" width="2.8" height="1.6" rx="0.5"/></g><path d="M207.2 191.6 L209.8 194.2" stroke="#dcdcdc" stroke-width="1" fill="none"/><path d="M210.4 192.4 V194.8 H208 Z" fill="#dcdcdc"/>
<g fill="#d6d6d6"><path d="M202.2 214 L204.4 207.6 L205.6 208 L203.6 214 Z"/><rect x="206" y="205.6" width="2" height="8.4"/><rect x="208.8" y="204.6" width="2.4" height="9.4"/></g>
<g fill="none" stroke="#9c9c9c" stroke-width="1"><circle cx="205" cy="238.4" r="2.3"/><circle cx="208.6" cy="242.6" r="2.3"/><path d="M202.6 245 L210.6 236.4"/></g><path d="M209 244.8 L211.6 245.6 L210.8 243 Z" fill="#9c9c9c"/>
<rect x="203.6" y="505.6" width="6" height="6" rx="1" fill="none" stroke="#d0d0d0" stroke-width="0.9"/><rect x="205.4" y="503.8" width="6.2" height="6.2" rx="1" fill="#e6e6e6"/>
</svg>
</body></html>
